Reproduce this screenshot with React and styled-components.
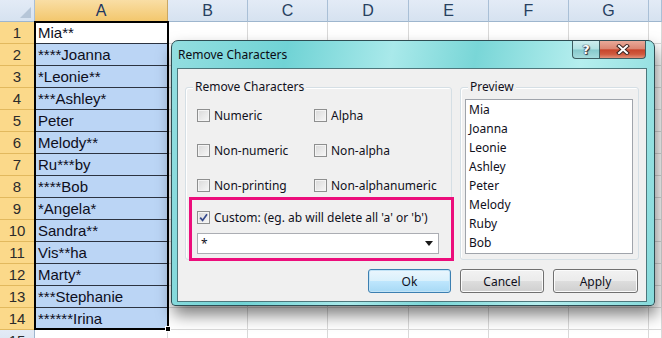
import styled, { createGlobalStyle } from "styled-components";

const GlobalStyle = createGlobalStyle`
  html, body {
    margin: 0;
    padding: 0;
    background: #ffffff;
  }
  body {
    width: 662px;
    height: 338px;
    overflow: hidden;
    font-family: "Liberation Sans", Arial, sans-serif;
  }
`;

const Page = styled.div`
  position: relative;
  width: 662px;
  height: 338px;
  overflow: hidden;
  background: #ffffff;
`;

/* ---------- spreadsheet ---------- */

const Sheet = styled.div`
  display: grid;
  grid-template-columns: 35px 133px 80px 80px 81px 80px 80px 80px 13px;
  grid-auto-rows: 22px;
`;

const HeadCell = styled.div`
  box-sizing: border-box;
  display: flex;
  align-items: center;
  justify-content: center;
  font-size: 16px;
  color: ${(p) => (p.$active ? "#1d3560" : "#27405f")};
  background: ${(p) =>
    p.$active
      ? "linear-gradient(#f9dea5, #f3c76d)"
      : "linear-gradient(#e3ebf6, #d6e2f0)"};
  border-right: 1px solid ${(p) => (p.$active ? "#c9a764" : "#a9bfd6")};
  border-bottom: 1px solid ${(p) => (p.$active ? "#c9a764" : "#9eb6ce")};
`;

const Corner = styled(HeadCell)`
  justify-content: flex-end;
  align-items: flex-end;
  padding: 0 3px 3px 0;
`;

const RowHead = styled(HeadCell)`
  font-size: 15px;
  color: #2b2b2b;
  background: ${(p) => (p.$active ? "#fbd98a" : "linear-gradient(#e3ebf6, #d6e2f0)")};
  border-bottom: 1px solid ${(p) => (p.$active ? "#e2b95e" : "#9eb6ce")};
  border-right: 1px solid ${(p) => (p.$active ? "#d8a94a" : "#9eb6ce")};
`;

const Cell = styled.div`
  box-sizing: border-box;
  border-right: 1px solid #d9d9d9;
  border-bottom: 1px solid #d9d9d9;
  background: #ffffff;
`;

const NameCell = styled.div`
  box-sizing: border-box;
  padding-left: 3px;
  font-size: 15px;
  line-height: 21px;
  color: #0e0e1c;
  white-space: nowrap;
  overflow: hidden;
  background: ${(p) => (p.$active ? "#ffffff" : "#bbd5f5")};
  border-bottom: 1px solid #2c3340;
`;

const Selection = styled.div`
  position: absolute;
  left: 34px;
  top: 21px;
  width: 135px;
  height: 309px;
  box-sizing: border-box;
  border: 2px solid #000000;
  pointer-events: none;
`;

const FillHandle = styled.div`
  position: absolute;
  left: 165px;
  top: 326px;
  width: 6px;
  height: 6px;
  box-sizing: border-box;
  background: #000000;
  border: 1px solid #ffffff;
`;

/* ---------- dialog ---------- */

const Dialog = styled.div`
  position: absolute;
  left: 171px;
  top: 40px;
  width: 484px;
  height: 266px;
  box-sizing: border-box;
  display: flex;
  flex-direction: column;
  padding: 0 7px 3px 5px;
  border: 1px solid #2e4c52;
  border-radius: 7px 7px 4px 4px;
  background: linear-gradient(
    100deg,
    #93dee0 0%,
    #70d3d5 22%,
    #a9e9ea 42%,
    #79d6d7 58%,
    #b5eeee 78%,
    #86dadb 100%
  );
  box-shadow: 2px 9px 16px rgba(0, 0, 0, 0.5);
  font-family: "Noto Sans", "Open Sans", sans-serif;
  color: #10101c;
`;

const TitleBar = styled.div`
  height: 27px;
  display: flex;
  justify-content: space-between;
  align-items: flex-start;
`;

const Title = styled.div`
  margin: 6px 0 0 1px;
  font-size: 12px;
  line-height: 16px;
  color: #0a0a14;
`;

const CaptionButtons = styled.div`
  display: flex;
  margin-right: 1px;
`;

const CaptionButton = styled.div`
  box-sizing: border-box;
  height: 18px;
  display: flex;
  align-items: center;
  justify-content: center;
  border: 1px solid #3d5d60;
  border-top: none;
`;

const HelpButton = styled(CaptionButton)`
  width: 27px;
  border-right: none;
  border-bottom-left-radius: 4px;
  background: linear-gradient(#cdeeee 0%, #b0e2e2 48%, #86c9cb 52%, #a5dcdd 100%);
  font-family: "DejaVu Sans", sans-serif;
  font-size: 13px;
  font-weight: bold;
  color: #ffffff;
  text-shadow: 0 0 1px #223, 0 0 1px #223, 1px 1px 1px #334;
`;

const CloseButton = styled(CaptionButton)`
  width: 47px;
  border-bottom-right-radius: 4px;
  background: linear-gradient(#e8a999 0%, #db8672 46%, #c7452c 52%, #cf5a3e 78%, #e2917a 100%);
`;

const Client = styled.div`
  position: relative;
  flex: 1;
  display: flex;
  flex-direction: column;
  padding: 18px 7px 8px 7px;
  background: #f0f0f0;
  border: 1px solid #4d777c;
`;

const Groups = styled.div`
  height: 173px;
  display: flex;
  gap: 8px;
`;

const GroupBox = styled.div`
  position: relative;
  box-sizing: border-box;
  width: ${(p) => p.$width}px;
  display: flex;
  flex-direction: column;
  padding: ${(p) => p.$pad};
  border: 1px solid #d5dfe5;
  border-radius: 3px;
  box-shadow: inset 1px 1px 0 #ffffff;
`;

const GroupLabel = styled.span`
  position: absolute;
  top: -9px;
  left: 7px;
  padding: 0 2px;
  background: #f0f0f0;
  font-size: 12px;
  line-height: 16px;
`;

const CheckGrid = styled.div`
  display: grid;
  grid-template-columns: 117px auto;
  grid-auto-rows: 35px;
`;

const CheckRow = styled.label`
  display: flex;
  align-items: center;
  gap: 4px;
  height: ${(p) => p.$height || 35}px;
  font-size: 12px;
  white-space: nowrap;
`;

const Box = styled.span`
  box-sizing: border-box;
  width: 13px;
  height: 13px;
  flex: none;
  display: flex;
  align-items: center;
  justify-content: center;
  border: 1px solid #8e8f8f;
  background: linear-gradient(135deg, #d9d9d9, #f7f7f7);
  box-shadow: inset 0 0 0 1px #f4f4f4;
`;

const Combo = styled.div`
  box-sizing: border-box;
  margin-top: 1px;
  width: 242px;
  height: 21px;
  display: flex;
  align-items: center;
  justify-content: space-between;
  padding: 0 5px 0 3px;
  background: #ffffff;
  border: 1px solid #abadb3;
  font-size: 12px;
`;

const Highlight = styled.div`
  position: absolute;
  left: 11px;
  top: 128px;
  width: 265px;
  height: 64px;
  box-sizing: border-box;
  border: 3px solid #ec0d7b;
  pointer-events: none;
`;

const ListBox = styled.div`
  flex: 1;
  display: flex;
  flex-direction: column;
  padding-left: 3px;
  background: #ffffff;
  border: 1px solid #a0a4ab;
`;

const ListItem = styled.div`
  font-size: 12px;
  line-height: 19px;
`;

const ButtonRow = styled.div`
  margin-top: 9px;
  margin-right: 1px;
  display: flex;
  justify-content: flex-end;
  gap: 9px;
`;

const Button = styled.div`
  box-sizing: border-box;
  width: ${(p) => p.$width}px;
  height: 24px;
  display: flex;
  align-items: center;
  justify-content: center;
  font-size: 12px;
  border-radius: 3px;
  border: 1px solid ${(p) => (p.$focused ? "#3c7fb1" : "#707070")};
  background: ${(p) =>
    p.$focused
      ? "linear-gradient(#eaf6fd 0%, #d9f0fc 50%, #bee6fd 51%, #a7d9f5 100%)"
      : "linear-gradient(#f2f2f2 0%, #ebebeb 50%, #dddddd 51%, #cfcfcf 100%)"};
  box-shadow: inset 0 0 0 1px ${(p) => (p.$focused ? "#c2e3f6" : "#fbfbfb")};
`;

const columns = ["B", "C", "D", "E", "F", "G"];
const names = [
  "Mia**",
  "****Joanna",
  "*Leonie**",
  "***Ashley*",
  "Peter",
  "Melody**",
  "Ru***by",
  "****Bob",
  "*Angela*",
  "Sandra**",
  "Vis**ha",
  "Marty*",
  "***Stephanie",
  "******Irina",
];
const preview = ["Mia", "Joanna", "Leonie", "Ashley", "Peter", "Melody", "Ruby", "Bob"];
const options = [
  ["Numeric", "Alpha"],
  ["Non-numeric", "Non-alpha"],
  ["Non-printing", "Non-alphanumeric"],
];

const CheckBox = ({ checked }) => (
  <Box>
    {checked && (
      <svg width="9" height="9" viewBox="0 0 9 9">
        <path d="M1.2 4.6 L3.6 7.4 L8 1.2" fill="none" stroke="#35498c" strokeWidth="1.7" />
      </svg>
    )}
  </Box>
);

const App = () => {
  return (
    <Page>
      <GlobalStyle />
      <Sheet>
        <Corner>
          <svg width="11" height="11" viewBox="0 0 11 11">
            <path d="M11 0 L11 11 L0 11 Z" fill="#b6c6d8" />
          </svg>
        </Corner>
        <HeadCell $active>A</HeadCell>
        {columns.map((c) => (
          <HeadCell key={c}>{c}</HeadCell>
        ))}
        <HeadCell />
        {names.map((name, i) => (
          <>
            <RowHead key={"h" + i} $active>
              {i + 1}
            </RowHead>
            <NameCell key={"n" + i} $active={i === 0}>
              {name}
            </NameCell>
            {[0, 1, 2, 3, 4, 5, 6].map((k) => (
              <Cell key={"c" + i + k} />
            ))}
          </>
        ))}
        <RowHead>15</RowHead>
        {[0, 1, 2, 3, 4, 5, 6, 7].map((k) => (
          <Cell key={"r15" + k} />
        ))}
      </Sheet>
      <Selection />
      <FillHandle />

      <Dialog>
        <TitleBar>
          <Title>Remove Characters</Title>
          <CaptionButtons>
            <HelpButton>?</HelpButton>
            <CloseButton>
              <svg width="14" height="11" viewBox="0 0 14 11">
                <path d="M3 2 L11 9 M11 2 L3 9" stroke="#3a2420" strokeWidth="4" strokeLinecap="square" />
                <path d="M3 2 L11 9 M11 2 L3 9" stroke="#ffffff" strokeWidth="2" strokeLinecap="square" />
              </svg>
            </CloseButton>
          </CaptionButtons>
        </TitleBar>
        <Client>
          <Groups>
            <GroupBox $width={267} $pad="10px 0 4px 11px">
              <GroupLabel>Remove Characters</GroupLabel>
              <CheckGrid>
                {options.map((pair) =>
                  pair.map((label) => (
                    <CheckRow key={label}>
                      <CheckBox />
                      {label}
                    </CheckRow>
                  ))
                )}
              </CheckGrid>
              <CheckRow $height={29}>
                <CheckBox checked />
                Custom: (eg. ab will delete all 'a' or 'b')
              </CheckRow>
              <Combo>
                <span>*</span>
                <svg width="8" height="5" viewBox="0 0 8 5">
                  <path d="M0 0 L8 0 L4 5 Z" fill="#1a1a1a" />
                </svg>
              </Combo>
            </GroupBox>
            <GroupBox $width={179} $pad="11px 5px 5px 4px">
              <GroupLabel>Preview</GroupLabel>
              <ListBox>
                {preview.map((p) => (
                  <ListItem key={p}>{p}</ListItem>
                ))}
              </ListBox>
            </GroupBox>
          </Groups>
          <ButtonRow>
            <Button $width={83} $focused>
              Ok
            </Button>
            <Button $width={84}>Cancel</Button>
            <Button $width={85}>Apply</Button>
          </ButtonRow>
          <Highlight />
        </Client>
      </Dialog>
    </Page>
  );
};

export default App;
